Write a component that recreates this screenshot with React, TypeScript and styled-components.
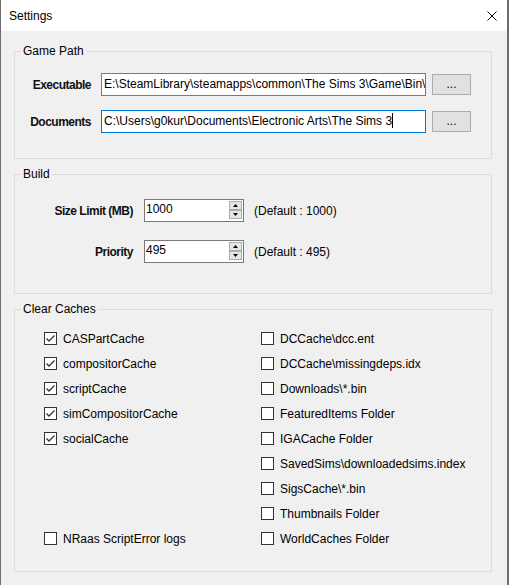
import styled, { createGlobalStyle } from 'styled-components';

const GlobalStyle = createGlobalStyle`
  html, body {
    margin: 0;
    padding: 0;
    background: #f0f0f0;
  }
  body {
    font-family: "Liberation Sans", Arial, sans-serif;
    font-size: 12px;
    color: #000;
  }
`;

const Window = styled.div`
  width: 509px;
  height: 585px;
  box-sizing: border-box;
  border-left: 1px solid #6e6e6e;
  border-right: 2px solid #6e6e6e;
  background: #f0f0f0;
  display: flex;
  flex-direction: column;
  overflow: hidden;
`;

const TitleBar = styled.div`
  height: 31px;
  flex-shrink: 0;
  background: #fff;
  display: flex;
  align-items: center;
  justify-content: space-between;
  padding: 0 10px 0 8px;
`;

const Title = styled.span`
  font-size: 12px;
`;

const Body = styled.div`
  display: flex;
  flex-direction: column;
  gap: 7px;
  padding: 12px 15px 0 13px;
`;

const Group = styled.fieldset`
  margin: 0;
  padding: 0;
  min-width: 0;
  border: 1px solid #dcdcdc;
`;

const Legend = styled.legend`
  margin-left: 6px;
  padding: 0 2px;
  line-height: 16px;
`;

const GroupContent = styled.div<{ $pad: string; $gap?: number }>`
  display: flex;
  flex-direction: column;
  gap: ${(p) => p.$gap ?? 0}px;
  padding: ${(p) => p.$pad};
`;

const Row = styled.div`
  display: flex;
  align-items: center;
`;

const FieldLabel = styled.span<{ $width: number; $space: number }>`
  width: ${(p) => p.$width}px;
  margin-right: ${(p) => p.$space}px;
  text-align: right;
  font-size: 12px;
  font-weight: bold;
  letter-spacing: -0.5px;
  color: #111;
  white-space: nowrap;
`;

const TextBox = styled.div<{ $focused?: boolean }>`
  width: 325px;
  height: 23px;
  box-sizing: border-box;
  border: 1px solid ${(p) => (p.$focused ? '#0078d7' : '#7a7a7a')};
  background: #fff;
  padding: 0 2px;
  line-height: 21px;
  white-space: nowrap;
  overflow: hidden;
`;

const Caret = styled.span`
  display: inline-block;
  width: 1px;
  height: 15px;
  background: #000;
  vertical-align: middle;
  margin-top: -2px;
`;

const BrowseButton = styled.button`
  width: 39px;
  height: 21px;
  margin-left: 6px;
  box-sizing: border-box;
  border: 1px solid #adadad;
  background: #e1e1e1;
  font-family: inherit;
  font-size: 12px;
  color: #000;
  padding: 0 0 2px;
  line-height: 18px;
`;

const SpinBox = styled.div`
  width: 100px;
  height: 23px;
  box-sizing: border-box;
  border: 1px solid #7a7a7a;
  background: #fff;
  display: flex;
`;

const SpinValue = styled.span`
  flex: 1;
  padding: 2px 0 0 1px;
  line-height: 15px;
`;

const Spinner = styled.div`
  display: flex;
  flex-direction: column;
  padding: 1px 1px 1px 0;
`;

const SpinButton = styled.div`
  width: 13px;
  height: 9px;
  box-sizing: border-box;
  border: 1px solid #adadad;
  background: #e5e5e5;
  display: flex;
  align-items: center;
  justify-content: center;
`;

const Note = styled.span`
  margin-left: 10px;
`;

const CheckGrid = styled.div`
  display: grid;
  grid-template-columns: 217px 1fr;
  grid-template-rows: repeat(9, 25px);
  padding: 9px 0 20px 29px;
`;

const CheckItem = styled.label<{ $row: number; $col: number }>`
  grid-row: ${(p) => p.$row};
  grid-column: ${(p) => p.$col};
  display: flex;
  align-items: center;
  gap: 6px;
  white-space: nowrap;
`;

const Box = styled.span`
  width: 13px;
  height: 13px;
  box-sizing: border-box;
  border: 1px solid #333;
  background: #fff;
  display: flex;
  align-items: center;
  justify-content: center;
`;

function Check({ label, checked, row, col }: { label: string; checked?: boolean; row: number; col: number }) {
  return (
    <CheckItem $row={row} $col={col}>
      <Box>
        {checked && (
          <svg width="11" height="11" viewBox="0 0 11 11">
            <polyline points="1.5,5.5 4,8 9.5,2.5" fill="none" stroke="#333" strokeWidth="1.3" />
          </svg>
        )}
      </Box>
      {label}
    </CheckItem>
  );
}

function Spin({ value }: { value: string }) {
  return (
    <SpinBox>
      <SpinValue>{value}</SpinValue>
      <Spinner>
        <SpinButton>
          <svg width="5" height="3" viewBox="0 0 5 3">
            <polygon points="2.5,0 5,3 0,3" fill="#000" />
          </svg>
        </SpinButton>
        <SpinButton>
          <svg width="5" height="3" viewBox="0 0 5 3">
            <polygon points="0,0 5,0 2.5,3" fill="#000" />
          </svg>
        </SpinButton>
      </Spinner>
    </SpinBox>
  );
}

const leftCaches = ['CASPartCache', 'compositorCache', 'scriptCache', 'simCompositorCache', 'socialCache'];
const rightCaches = [
  'DCCache\\dcc.ent',
  'DCCache\\missingdeps.idx',
  'Downloads\\*.bin',
  'FeaturedItems Folder',
  'IGACache Folder',
  'SavedSims\\downloadedsims.index',
  'SigsCache\\*.bin',
  'Thumbnails Folder',
  'WorldCaches Folder',
];

export default function App() {
  return (
    <>
      <GlobalStyle />
      <Window>
        <TitleBar>
          <Title>Settings</Title>
          <svg width="10" height="10" viewBox="0 0 10 10">
            <path d="M0.5 0.5 L9.5 9.5 M9.5 0.5 L0.5 9.5" stroke="#000" strokeWidth="1" />
          </svg>
        </TitleBar>
        <Body>
          <Group>
            <Legend>Game Path</Legend>
            <GroupContent $pad="14px 0 25px 0" $gap={14}>
              <Row>
                <FieldLabel $width={76} $space={10}>Executable</FieldLabel>
                <TextBox>E:\SteamLibrary\steamapps\common\The Sims 3\Game\Bin\</TextBox>
                <BrowseButton>...</BrowseButton>
              </Row>
              <Row>
                <FieldLabel $width={76} $space={10}>Documents</FieldLabel>
                <TextBox $focused>
                  C:\Users\g0kur\Documents\Electronic Arts\The Sims 3<Caret />
                </TextBox>
                <BrowseButton>...</BrowseButton>
              </Row>
            </GroupContent>
          </Group>
          <Group>
            <Legend>Build</Legend>
            <GroupContent $pad="17px 0 30px 0" $gap={18}>
              <Row>
                <FieldLabel $width={118} $space={11}>Size Limit (MB)</FieldLabel>
                <Spin value="1000" />
                <Note>(Default : 1000)</Note>
              </Row>
              <Row>
                <FieldLabel $width={118} $space={11}>Priority</FieldLabel>
                <Spin value="495" />
                <Note>(Default : 495)</Note>
              </Row>
            </GroupContent>
          </Group>
          <Group>
            <Legend>Clear Caches</Legend>
            <CheckGrid>
              {leftCaches.map((c, i) => (
                <Check key={c} label={c} checked row={i + 1} col={1} />
              ))}
              <Check label="NRaas ScriptError logs" row={9} col={1} />
              {rightCaches.map((c, i) => (
                <Check key={c} label={c} row={i + 1} col={2} />
              ))}
            </CheckGrid>
          </Group>
        </Body>
      </Window>
    </>
  );
}
